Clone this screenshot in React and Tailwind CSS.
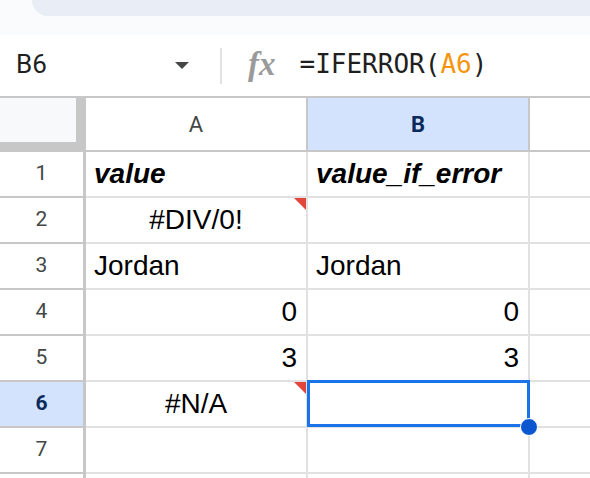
import React from 'react';

const ROWS = [
  { n: 1, a: 'value', b: 'value_if_error', bold: true },
  { n: 2, a: '#DIV/0!', b: '', alignA: 'center', err: true },
  { n: 3, a: 'Jordan', b: 'Jordan' },
  { n: 4, a: '0', b: '0', alignA: 'right', alignB: 'right' },
  { n: 5, a: '3', b: '3', alignA: 'right', alignB: 'right' },
  { n: 6, a: '#N/A', b: '', alignA: 'center', err: true, active: true },
  { n: 7, a: '', b: '' },
  { n: '', a: '', b: '' },
];

const alignCls = {
  left: 'justify-start pl-[8px]',
  center: 'justify-center',
  right: 'justify-end pr-[9px]',
};

function Cell({ text, align = 'left', bold, err, width, selected }) {
  return (
    <div
      className={`relative flex items-center h-full border-r-2 border-[#e1e1e1] text-[28px] text-black ${alignCls[align]} ${width}`}
      style={{ fontFamily: '"Liberation Sans", Arial, sans-serif' }}
    >
      <span className={bold ? 'font-bold italic' : ''}>{text}</span>
      {err && (
        <div className="absolute top-0 right-0 w-0 h-0 border-t-[12px] border-l-[12px] border-t-[#e2453c] border-l-transparent" />
      )}
      {selected && (
        <>
          <div className="absolute -left-[1px] -top-[2px] -right-[2px] -bottom-[1px] border-[3px] border-[#1a73e8]" />
          <div className="absolute -right-[10px] -bottom-[10px] w-[18px] h-[18px] rounded-full bg-[#0b57d0] border border-white z-10" />
        </>
      )}
    </div>
  );
}

export default function App() {
  return (
    <div className="w-[590px] h-[478px] overflow-hidden bg-white" style={{ fontFamily: 'Roboto, "Liberation Sans", sans-serif' }}>
      {/* top strip */}
      <div className="h-[35px] bg-[#f9fbfd]">
        <div className="ml-[32px] h-[16px] bg-[#e9eef6] rounded-bl-[18px]" />
      </div>

      {/* formula bar */}
      <div className="h-[61px] flex items-center bg-white">
        <div className="w-[160px] pl-[16px] text-[26px] text-[#1f1f1f] -mt-[3px]">B6</div>
        <div className="w-0 h-0 ml-[15px] border-l-[7px] border-r-[7px] border-t-[7px] border-l-transparent border-r-transparent border-t-[#444746]" />
        <div className="ml-[31px] w-[2px] h-[36px] bg-[#e1e3e1]" />
        <div
          className="ml-[26px] text-[33px] italic font-bold text-[#9a9a9a] leading-none -mt-[3px]"
          style={{ fontFamily: '"Liberation Serif", serif' }}
        >
          fx
        </div>
        <div
          className="ml-[24px] text-[26px] text-[#1f1f1f] -mt-[3px]"
          style={{ fontFamily: '"DejaVu Sans Mono", monospace' }}
        >
          =IFERROR(<span className="text-[#f6950f]">A6</span>)
        </div>
      </div>

      {/* grid */}
      <div className="border-t-2 border-[#c7c7c7]">
        {/* header row */}
        <div className="flex h-[54px] border-b-2 border-[#c7c7c7]">
          <div className="w-[86px] h-full bg-[#f8f9fa] border-r-[10px] border-b-[8px] border-[#c7c7c7]" />
          <div className="w-[222px] flex items-center justify-center border-r-2 border-[#c7c7c7] text-[22px] text-[#444746]">A</div>
          <div className="w-[222px] flex items-center justify-center border-r-2 border-[#c7c7c7] bg-[#d3e3fd] text-[22px] font-bold text-[#0b2a5c]">B</div>
          <div className="flex-1" />
        </div>

        {ROWS.map((r, i) => (
          <div key={i} className="flex h-[46px] border-b-2 border-[#e1e1e1]">
            <div
              className={`w-[86px] -mb-[2px] flex items-center justify-center border-r-[3px] border-b-2 border-[#c7c7c7] text-[21px] ${
                r.active ? 'bg-[#d3e3fd] font-bold text-[#0b2a5c]' : 'bg-white text-[#444746]'
              }`}
            >
              {r.n}
            </div>
            <Cell width="w-[222px]" text={r.a} align={r.alignA} bold={r.bold} err={r.err} />
            <Cell width="w-[222px]" text={r.b} align={r.alignB} bold={r.bold} selected={r.active} />
            <div className="flex-1" />
          </div>
        ))}
      </div>
    </div>
  );
}
